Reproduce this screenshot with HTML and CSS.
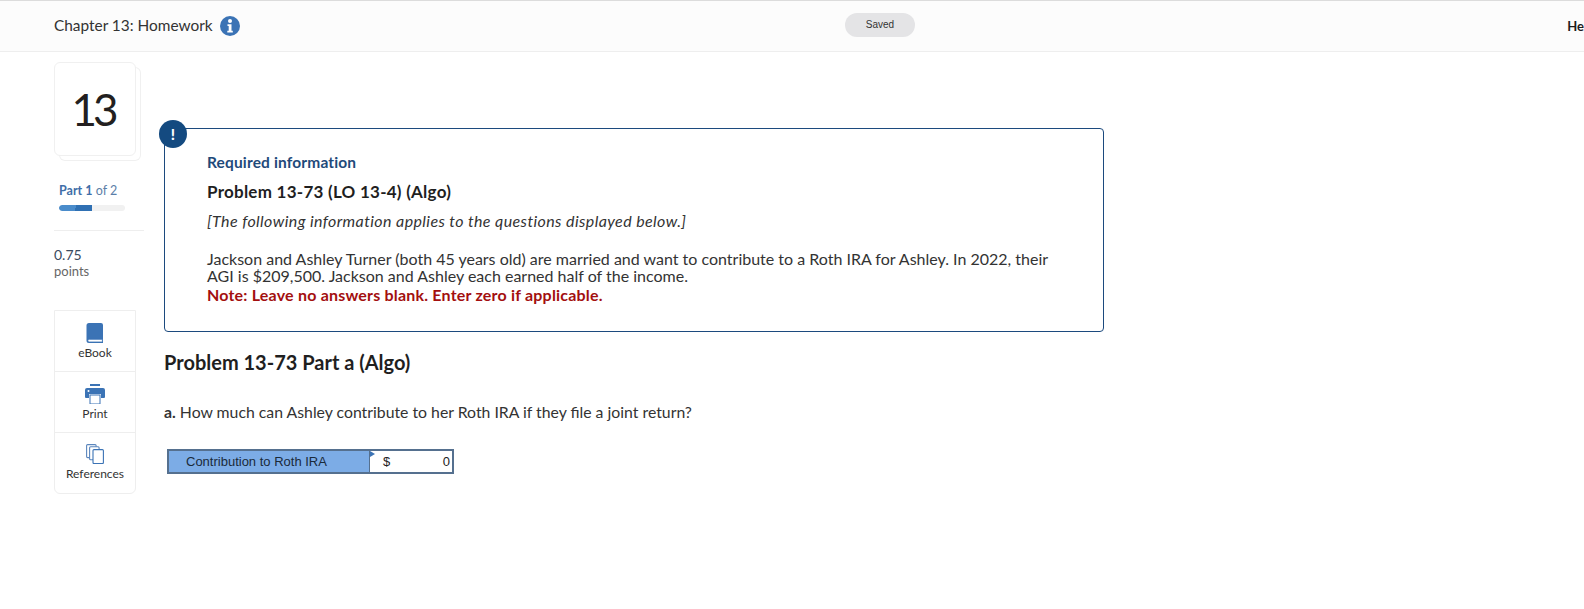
FILE: index.html
```html
<!DOCTYPE html>
<html lang="en">
<head>
<meta charset="utf-8">
<title>Chapter 13: Homework</title>
<link rel="stylesheet" href="styles.css">
</head>
<body>
<header class="topbar">
  <div class="title">
    <span>Chapter 13: Homework</span>
    <svg class="info" viewBox="0 0 20 20" width="20" height="20"><circle cx="10" cy="10" r="10" fill="#3b73b5"/><circle cx="10" cy="5" r="2" fill="#fff"/><path d="M7.5 8.2h4v6.6h1.3v1.8H7.3v-1.8h1.4V10H7.5z" fill="#fff"/></svg>
  </div>
  <div class="saved">Saved</div>
  <div class="help">He</div>
</header>
<div class="page">
  <aside class="side">
    <div class="qnum"><div class="qnum-inner">13</div></div>
    <div class="part"><b>Part 1</b> of 2</div>
    <div class="track"><div class="fill"></div></div>
    <hr class="rule">
    <div class="pts">0.75</div>
    <div class="pts-label">points</div>
    <div class="tools">
      <div class="tool">
        <svg viewBox="0 0 18 20" width="18" height="20"><path d="M3 0h12a2 2 0 0 1 2 2v18H3a2.500 2.500 0 0 1-2.500-2.500V2.500A2.500 2.500 0 0 1 3 0z" fill="#3b73b5"/><path d="M3.200 16.300H16.400v2.700H3.200a1.350 1.350 0 0 1 0-2.700z" fill="#fff" stroke="#3b73b5" stroke-width=".8"/></svg>
        <span>eBook</span>
      </div>
      <div class="tool">
        <svg viewBox="0 0 20 20" width="20" height="20"><rect x="5" y="0" width="10" height="2" fill="#3b73b5"/><path d="M2 4h16a2 2 0 0 1 2 2v7a1 1 0 0 1-1 1h-3v-4H4v4H1a1 1 0 0 1-1-1V6a2 2 0 0 1 2-2z" fill="#3b73b5"/><circle cx="3.500" cy="7" r="1" fill="#fff"/><rect x="5" y="11" width="10" height="9" fill="#fff" stroke="#3b73b5" stroke-width="1"/></svg>
        <span>Print</span>
      </div>
      <div class="tool">
        <svg viewBox="0 0 18 20" width="18" height="20" fill="#fff" stroke="#5b86bd" stroke-width="1.100"><rect x=".6" y=".6" width="9.500" height="13" rx="1"/><rect x="3.600" y="2.800" width="9.500" height="13" rx="1"/><rect x="7" y="5.600" width="10.400" height="14" rx="1" stroke="#3b73b5"/></svg>
        <span>References</span>
      </div>
    </div>
  </aside>
  <main class="main">
    <section class="notice">
      <div class="badge">!</div>
      <h3 class="req">Required information</h3>
      <h4 class="prob">Problem 13-73 (LO 13-4) (Algo)</h4>
      <p class="lead">[The following information applies to the questions displayed below.]</p>
      <p class="body-text">Jackson and Ashley Turner (both 45 years old) are married and want to contribute to a Roth IRA for Ashley. In 2022, their AGI is $209,500. Jackson and Ashley each earned half of the income.<strong class="note">Note: Leave no answers blank. Enter zero if applicable.</strong></p>
    </section>
    <h2 class="part-title">Problem 13-73 Part a (Algo)</h2>
    <p class="question"><b>a.</b> How much can Ashley contribute to her Roth IRA if they file a joint return?</p>
    <div class="answer">
      <div class="answer-label">Contribution to Roth IRA</div>
      <div class="answer-cell"><span>$</span><span>0</span></div>
    </div>
  </main>
</div>
</body>
</html>
```
FILE: styles.css
```css
html, body { margin: 0; padding: 0; background: #fff; }
body { width: 1584px; height: 609px; overflow: hidden; font-family: Lato, "Open Sans", sans-serif; color: #2b2b2b; }

.topbar { box-sizing: border-box; height: 52px; background: #fcfcfc; border-top: 1px solid #dcdcdc; border-bottom: 1px solid #eeeeee; display: flex; align-items: center; padding-left: 54px; }
.title { display: flex; align-items: center; gap: 7px; font-size: 15.4px; line-height: 20px; color: #333; width: 791px; }
.title span { position: relative; top: -1px; }
.info { flex: none; }
.saved { width: 70px; height: 24px; margin-top: -2px; border-radius: 12px; background: #e4e4e6; font: 10px/24px "Liberation Sans", sans-serif; text-align: center; color: #333; }
.help { margin-left: auto; font-weight: 700; font-size: 13px; color: #1c1c1c; white-space: nowrap; }

.page { display: flex; padding-left: 54px; }
.side { width: 90px; flex: none; padding-top: 10px; }
.qnum { width: 82px; height: 94px; box-sizing: border-box; border: 1px solid #f0f0f0; border-radius: 6px; background: #fff; box-shadow: 5px 5px 0 -1px #fff, 5px 5px 0 0 #f0f0f0; }
.qnum-inner { font-size: 44px; font-weight: 400; letter-spacing: -4px; line-height: 94px; text-align: center; color: #231f20; margin-top: -1px; padding-right: 4px; }
.part { margin: 28px 0 0 5px; font-size: 12.5px; line-height: 14px; color: #5b7ea8; }
.part b { color: #3f6ea8; }
.track { margin: 7px 0 0 5px; width: 66px; height: 6px; border-radius: 3px; background: #f1f1f1; overflow: hidden; }
.fill { width: 33px; height: 6px; background: linear-gradient(105deg, #4a8ccb 50%, #2f70b3 50%); border-radius: 3px 0 0 3px; }
.rule { margin: 19px 0 0; border: 0; border-top: 1px solid #eeeeee; width: 90px; }
.pts { margin-top: 16px; font-size: 14px; line-height: 16px; color: #3a4a60; }
.pts-label { font-size: 13px; line-height: 16px; color: #666; }
.tools { margin-top: 31px; width: 82px; box-sizing: border-box; border: 1px solid #eeeeee; border-radius: 0 0 6px 6px; }
.tool { height: 61px; box-sizing: border-box; display: flex; flex-direction: column; align-items: center; justify-content: flex-end; gap: 3px; padding-bottom: 12px; font-size: 12px; line-height: 13px; color: #333; border-bottom: 1px solid #eeeeee; }
.tool:last-child { border-bottom: 0; height: 60px; padding-bottom: 13px; }

.main { margin-left: 20px; width: 940px; padding-top: 76px; }
.notice { position: relative; box-sizing: border-box; width: 940px; height: 204px; border: 1px solid #1c4a7e; border-radius: 4px; padding: 24px 42px 0; }
.badge { position: absolute; left: -6px; top: -9px; width: 28px; height: 28px; border-radius: 50%; background: #144a80; color: #fff; font-size: 15px; font-weight: 900; line-height: 28px; text-align: center; }
.req { margin: 0; font-size: 15.5px; letter-spacing: .15px; line-height: 18px; font-weight: 700; color: #1f4a7a; }
.prob { margin: 11px 0 0; font-size: 17px; letter-spacing: .25px; line-height: 20px; font-weight: 700; color: #1f1f1f; }
.lead { margin: 9px 0 0; font-size: 16px; letter-spacing: .4px; line-height: 20px; font-style: italic; color: #333; }
.body-text { margin: 19px 0 0; font-size: 16px; line-height: 17px; color: #333; width: 850px; }
.note { display: block; margin-top: 2px; color: #a30f0f; font-weight: 700; letter-spacing: .2px; }
.part-title { margin: 19px 0 0; font-size: 20px; line-height: 22px; font-weight: 700; color: #1f1f1f; }
.question { margin: 29px 0 0; font-size: 15.8px; line-height: 20px; color: #333; }
.answer { margin: 27px 0 0 3px; display: flex; width: 287px; height: 25px; box-sizing: border-box; border: 2px solid #55708f; background: #fff; }
.answer-label { width: 201px; box-sizing: border-box; padding-left: 17px; background: #7cace6; border-right: 1px solid #55708f; font: 13px/21px "Liberation Sans", sans-serif; color: #1a2a3a; }
.answer-cell { flex: 1; display: flex; justify-content: space-between; padding: 0 2px 0 13px; font: 13px/21px "Liberation Sans", sans-serif; color: #222; position: relative; }
.answer-cell::before { content: ""; position: absolute; left: 0; top: 0; border-left: 5px solid #3b73b5; border-top: 3px solid transparent; border-bottom: 3px solid transparent; }
```
